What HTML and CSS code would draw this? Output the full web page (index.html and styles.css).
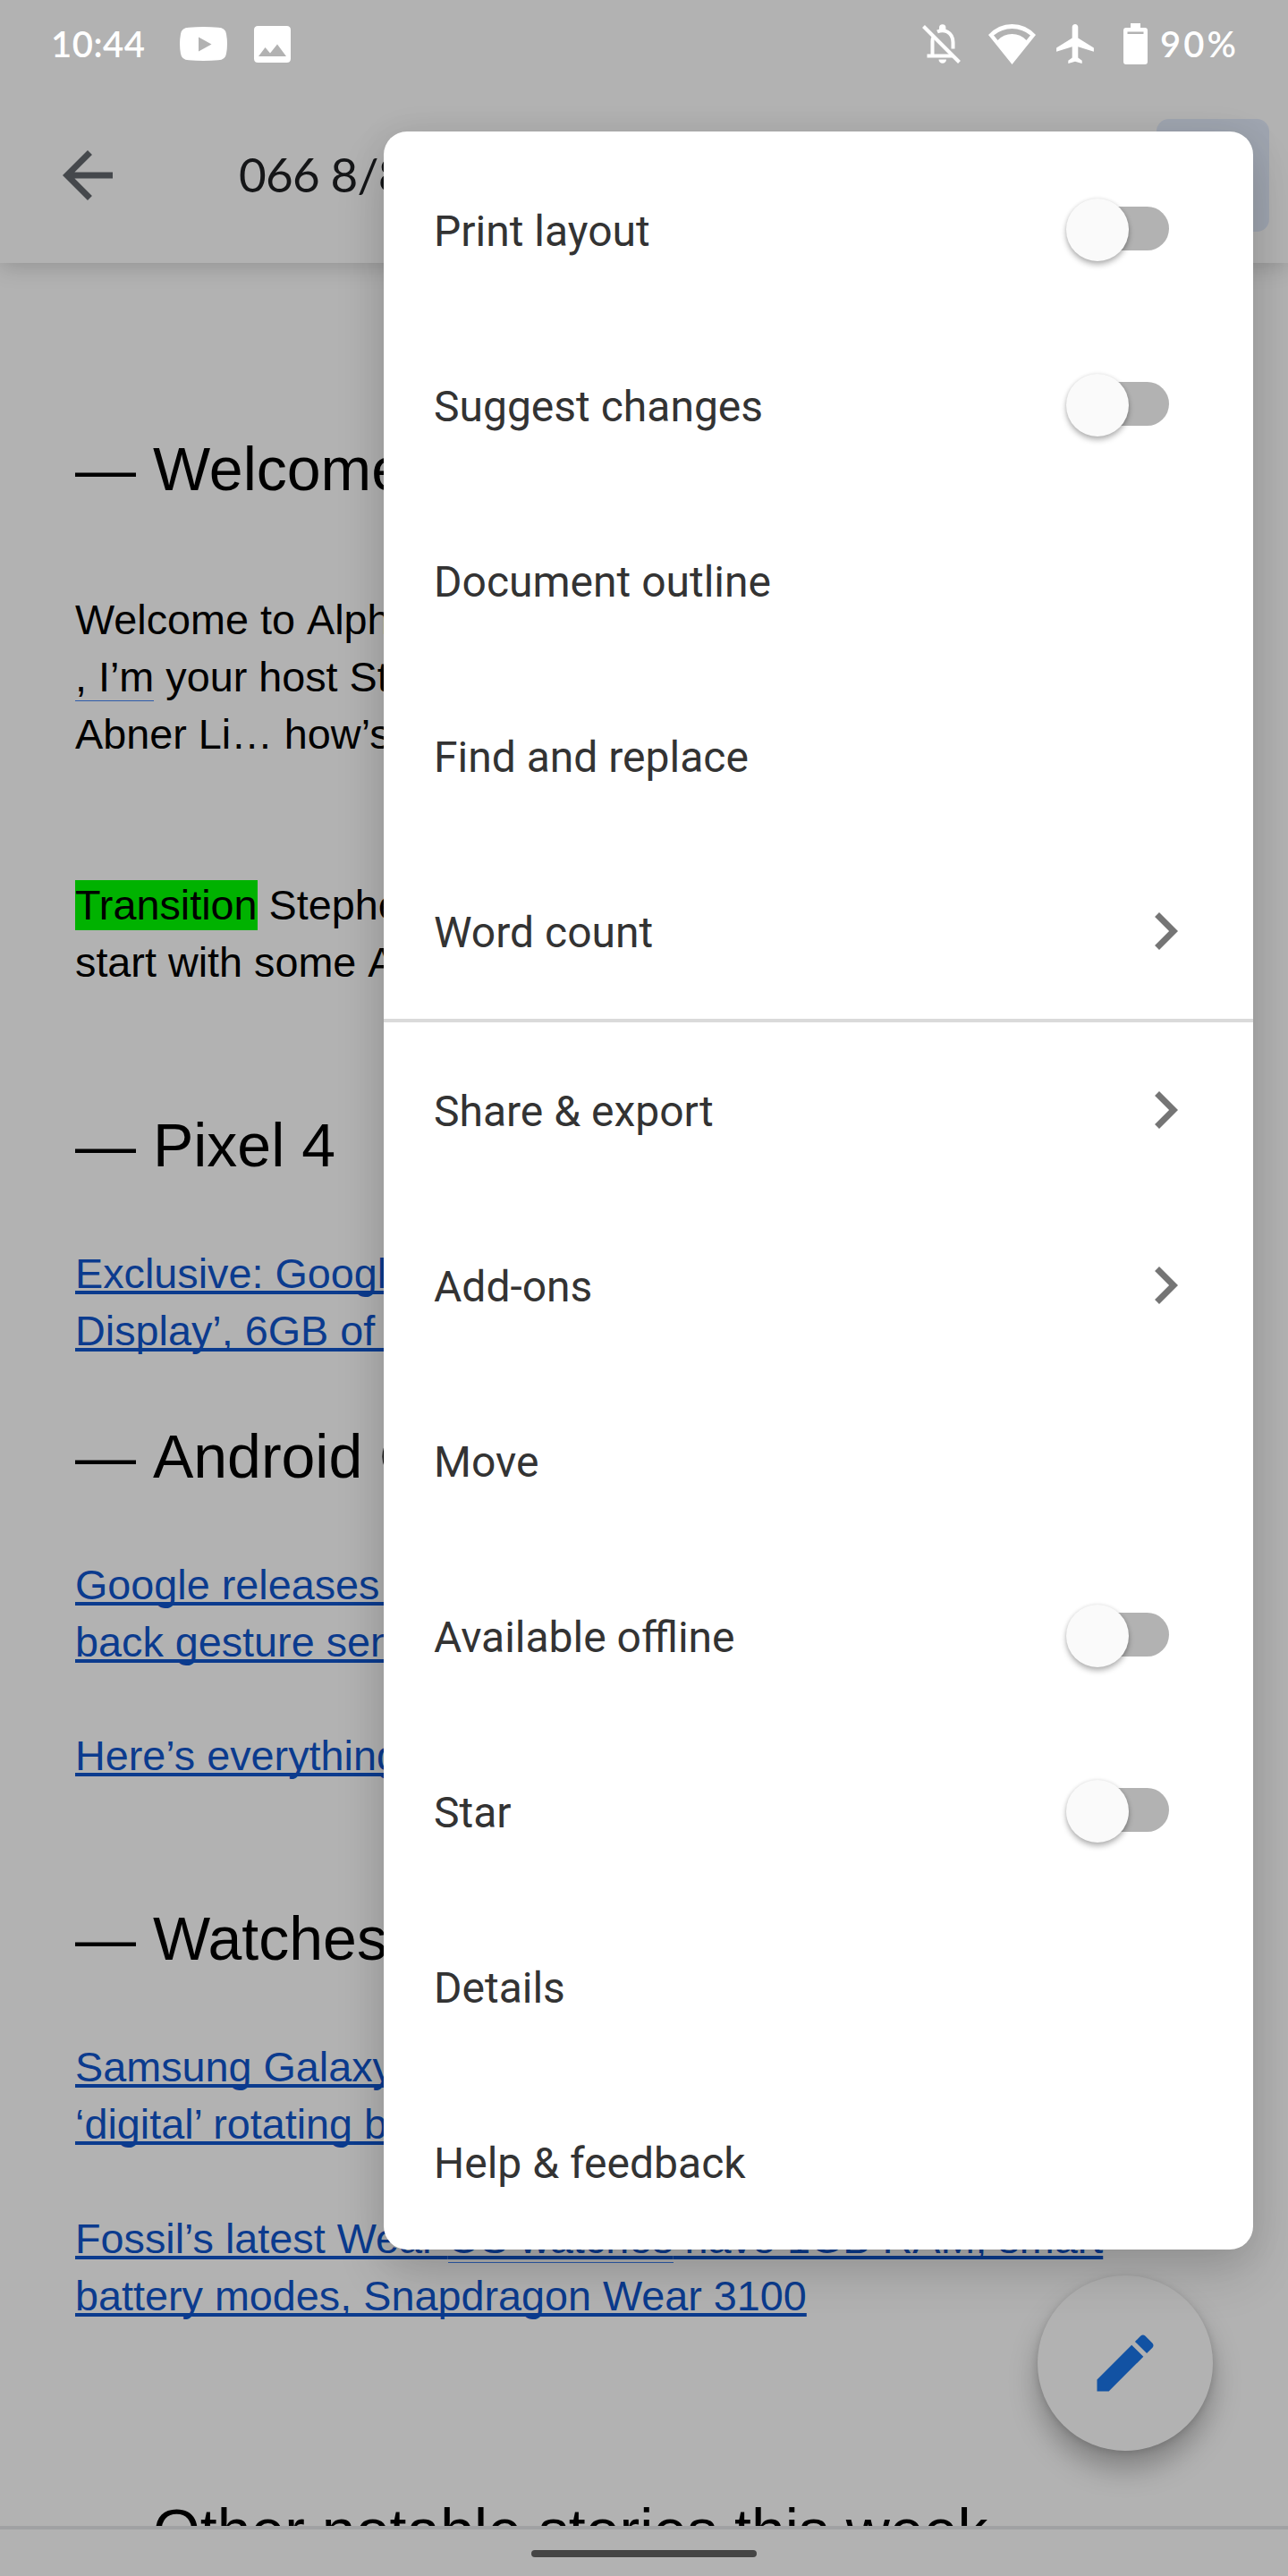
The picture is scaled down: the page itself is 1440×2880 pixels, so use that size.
FILE: index.html
```html
<!DOCTYPE html>
<html lang="en">
<head>
    <meta charset="UTF-8">
    <meta name="viewport" content="width=device-width, initial-scale=1.0">
    <title>066 8/8</title>
    <link rel="stylesheet" href="styles.css">
</head>
<body>
    <div class="screen">
        <div class="status-bar">
            <div class="status-left">
                <span class="time">10:44</span>
                <svg class="icon-youtube" viewBox="0 0 53 38">
                    <path fill="#fff" fill-rule="evenodd" d="M10 .8Q26.500-.8 43 .8Q51 1 52 8Q54 19 52 30Q51 37 43 37.200Q26.500 38.800 10 37.200Q2 37 1 30Q-1 19 1 8Q2 1 10 .8zM21 11.500v16L35.500 19.500z"/>
                </svg>
                <svg class="icon-image" viewBox="0 0 41 41">
                    <path fill="#fff" fill-rule="evenodd" d="M4.500 0h32Q41 0 41 4.500v32Q41 41 36.500 41h-32Q0 41 0 36.500v-32Q0 0 4.500 0zM5 34h31L26 20.500l-8 10-5.500-6.500z"/>
                </svg>
            </div>
            <div class="status-right">
                <svg class="icon-bell" viewBox="0 0 43 44" fill="none" stroke="#fff" stroke-width="4">
                    <path d="M1.500 2.500l40 40"/>
                    <path d="M5.500 35.500h29M11.500 35V19q0-3 1.500-5.500M17 8.500q5.500-2.500 11 0q6.500 3.500 6.500 12v7"/>
                    <path fill="#fff" stroke="none" d="M19 7V4a3.700 3.700 0 0 1 7.400 0v3zM18.500 39.500h8.500a4.200 4.200 0 0 1-8.500 0z"/>
                </svg>
                <svg class="icon-wifi" viewBox="0 0 53 45">
                    <path fill="#fff" fill-rule="evenodd" d="M0 12Q11 0 26.500 0T53 12L26.500 45zM6 12.500l4.500 5.500Q17 11 26.500 11T42.500 18L47 12.500Q38 5 26.500 5T6 12.500z"/>
                </svg>
                <svg class="icon-plane" viewBox="2 2 19 20">
                    <path fill="#fff" d="M21 16v-2l-8-5V3.500c0-.83-.67-1.500-1.500-1.500S10 2.670 10 3.500V9l-8 5v2l8-2.500V19l-2 1.500V22l3.500-1 3.500 1v-1.500L13 19v-5.500l8 2.500z"/>
                </svg>
                <svg class="icon-battery" viewBox="0 0 27 46">
                    <path fill="#fff" fill-rule="evenodd" d="M8 0h11v5h5q3 0 3 3v35q0 3-3 3H3q-3 0-3-3V8q0-3 3-3h5zM4.500 9.500v2.500h18V9.500z"/>
                </svg>
                <span class="battery-level">90%</span>
            </div>
        </div>

        <div class="app-bar">
            <svg class="icon" viewBox="0 0 24 24">
                <path fill="#63686e" d="M20 11H7.830l5.590-5.590L12 4l-8 8 8 8 1.410-1.410L7.830 13H20v-2z"/>
            </svg>
            <h1>066 8/8</h1>
            <div class="app-action"></div>
        </div>

        <div class="document">
            <section class="intro">
                <h2>— Welcome</h2>
                <p>Welcome to <span class="word">Alphabet</span><br><span class="suggestion">, I’m</span> your host Stephen<br>Abner Li… how’s it</p>
                <p><mark>Transition</mark> Stephen<br>start with some <span class="word">Android</span></p>
            </section>
            <section class="spaced">
                <h2>— Pixel 4</h2>
                <p><a href="#">Exclusive: Google<br>Display’, 6GB of RAM</a></p>
            </section>
            <section class="android">
                <h2>— <span class="word">Android</span> Q</h2>
                <p><a href="#">Google releases Android<br>back gesture sens</a></p>
                <p><a href="#">Here’s everything new</a></p>
            </section>
            <section class="spaced">
                <h2>— Watches</h2>
                <p><a href="#">Samsung Galaxy Watch<br>‘digital’ rotating bezel</a></p>
                <p><a href="#">Fossil’s latest Wear <span class="suggestion">OS watches</span> have 1GB RAM, smart<br>battery modes, Snapdragon Wear 3100</a></p>
            </section>
            <section class="last">
                <h2>— Other notable stories this week</h2>
            </section>
        </div>

        <div class="nav-bar"></div>

        <button class="fab" aria-label="Edit">
            <svg class="icon" viewBox="0 0 24 24">
                <path fill="#1a76ea" d="M3 17.250V21h3.750L17.810 9.940l-3.750-3.750L3 17.250zM20.710 7.040c.39-.39.39-1.020 0-1.410l-2.340-2.340c-.39-.39-1.020-.39-1.410 0l-1.830 1.830 3.750 3.750 1.830-1.830z"/>
            </svg>
        </button>

        <div class="scrim"></div>

        <div class="menu">
            <div class="menu-item"><span>Print layout</span><span class="switch"></span></div>
            <div class="menu-item"><span>Suggest changes</span><span class="switch"></span></div>
            <div class="menu-item"><span>Document outline</span></div>
            <div class="menu-item"><span>Find and replace</span></div>
            <div class="menu-item">
                <span>Word count</span>
                <svg class="icon" viewBox="0 0 24 24"><path fill="#757575" d="M8.590 16.590L13.170 12 8.590 7.410 10 6l6 6-6 6z"/></svg>
            </div>
            <div class="divider"></div>
            <div class="menu-item">
                <span>Share &amp; export</span>
                <svg class="icon" viewBox="0 0 24 24"><path fill="#757575" d="M8.590 16.590L13.170 12 8.590 7.410 10 6l6 6-6 6z"/></svg>
            </div>
            <div class="menu-item">
                <span>Add-ons</span>
                <svg class="icon" viewBox="0 0 24 24"><path fill="#757575" d="M8.590 16.590L13.170 12 8.590 7.410 10 6l6 6-6 6z"/></svg>
            </div>
            <div class="menu-item"><span>Move</span></div>
            <div class="menu-item"><span>Available offline</span><span class="switch"></span></div>
            <div class="menu-item"><span>Star</span><span class="switch"></span></div>
            <div class="menu-item"><span>Details</span></div>
            <div class="menu-item"><span>Help &amp; feedback</span></div>
        </div>
    </div>
</body>
</html>
```

FILE: styles.css
```css
* {
    box-sizing: border-box;
}
body {
    margin: 0;
    background-color: #fff;
}
.screen {
    position: relative;
    display: flex;
    flex-direction: column;
    width: 1440px;
    height: 2880px;
    overflow: hidden;
    background: #fff;
}
.icon {
    display: block;
    width: 84px;
    height: 84px;
    flex: none;
}

/* status bar stays white above the scrim */
.status-bar {
    position: relative;
    z-index: 3;
    display: flex;
    justify-content: space-between;
    height: 98px;
    padding: 0 56px 0 57px;
    color: #fff;
    font-family: Lato, sans-serif;
    font-size: 40px;
    font-weight: 600;
    line-height: 98px;
}
.status-left, .status-right {
    display: flex;
    align-items: center;
}
.time {
    width: 144px;
    letter-spacing: 0.5px;
}
.icon-youtube {
    width: 53px;
    height: 38px;
    margin-right: 30px;
}
.icon-image {
    width: 41px;
    height: 41px;
}
.icon-bell {
    width: 43px;
    height: 44px;
    margin-right: 31px;
}
.icon-wifi {
    width: 53px;
    height: 45px;
    margin-right: 23px;
}
.icon-plane {
    width: 42px;
    height: 44px;
    margin-right: 33px;
}
.icon-battery {
    width: 27px;
    height: 46px;
    margin-right: 14px;
}
.battery-level {
    width: 87px;
    letter-spacing: 3px;
    white-space: nowrap;
}

.app-bar {
    position: relative;
    z-index: 1;
    display: flex;
    align-items: center;
    height: 196px;
    padding: 0 21px 0 56px;
    background: #fff;
    box-shadow: 0 4px 24px rgba(0, 0, 0, 0.18);
    clip-path: inset(0 0 -60px 0);
}
.app-bar h1 {
    flex: 1;
    margin: 0 0 4px 127px;
    color: #1f2023;
    font-family: Lato, sans-serif;
    font-size: 53px;
    font-weight: 400;
    letter-spacing: -0.8px;
}
.app-action {
    width: 126px;
    height: 126px;
    border-radius: 14px;
    background: #e4ecfd;
}

.document {
    flex: 1;
    min-height: 0;
    overflow: hidden;
    padding: 190px 84px 0;
    color: #000;
    font-family: "Liberation Sans", Arial, sans-serif;
    font-size: 46.75px;
    line-height: 64px;
    white-space: nowrap;
}
.document section {
    display: flex;
    flex-direction: column;
    gap: 64px;
    margin-bottom: 68px;
}
.document h2 {
    margin: 0 0 8px;
    font-size: 68px;
    font-weight: 400;
    line-height: 80px;
}
.document p {
    margin: 0;
}
.document .intro {
    gap: 127px;
    margin-bottom: 0;
}
.document .intro h2 {
    margin-bottom: -30px;
}
.document .android {
    gap: 63px;
}
.document .android h2 {
    margin-bottom: 9px;
}
.document .spaced {
    margin-top: 132px;
}
.document .last {
    margin-top: 190px;
}
.document a {
    color: #1155cc;
    text-decoration: underline;
    text-decoration-thickness: 4px;
    text-underline-offset: 3px;
    text-decoration-skip-ink: none;
}
.document mark {
    padding: 2px 0;
    color: #000;
    background: #00ff00;
}
/* keeps the space before a capital A from being kerned */
.word {
    display: inline-block;
}
.suggestion {
    border-bottom: 1px solid #4285f4;
}

.nav-bar {
    flex: none;
    height: 56px;
    border-top: 4px solid #e5e7ea;
    padding-top: 23px;
    background: #fff;
}
.nav-bar::before {
    content: "";
    display: block;
    width: 252px;
    height: 8px;
    margin: 0 auto;
    border-radius: 4px;
    background: #646464;
}

.fab {
    position: absolute;
    right: 84px;
    bottom: 140px;
    display: flex;
    align-items: center;
    justify-content: center;
    width: 196px;
    height: 196px;
    padding: 0;
    border: none;
    border-radius: 50%;
    background: #fff;
    box-shadow: 0 20px 32px rgba(0, 0, 0, 0.28), 0 2px 8px rgba(0, 0, 0, 0.14);
}
.scrim {
    position: absolute;
    inset: 0;
    z-index: 2;
    background: rgba(0, 0, 0, 0.302);
}

.menu {
    position: absolute;
    top: 147px;
    left: 429px;
    z-index: 4;
    width: 972px;
    padding-top: 12px;
    border-radius: 26px;
    background: #fff;
    box-shadow: 0 28px 56px rgba(0, 0, 0, 0.14), 0 4px 40px rgba(0, 0, 0, 0.08);
    color: #333;
    font-family: Roboto, sans-serif;
    font-size: 48px;
}
.menu-item {
    display: flex;
    align-items: center;
    justify-content: space-between;
    height: 196px;
    padding: 0 56px;
}
.menu-item span:first-child {
    padding-top: 3px;
}
.divider {
    height: 4px;
    background: #dadada;
}
.switch {
    position: relative;
    width: 107px;
    height: 49px;
    margin: 0 38px 3px 0;
    border-radius: 25px;
    background: #b2b2b2;
}
.switch::before {
    content: "";
    position: absolute;
    top: -9px;
    left: -8px;
    width: 70px;
    height: 70px;
    border-radius: 50%;
    background: #fafafa;
    box-shadow: 0 4px 6px rgba(0, 0, 0, 0.28), 0 0 4px rgba(0, 0, 0, 0.1);
}
```
